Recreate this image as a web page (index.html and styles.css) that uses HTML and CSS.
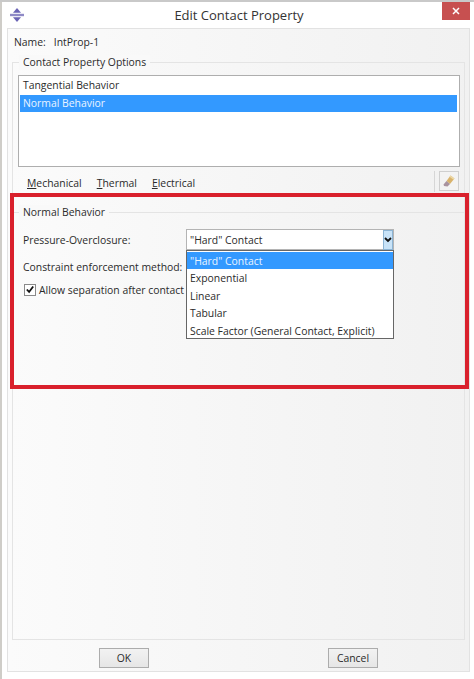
FILE: index.html
```html
<!DOCTYPE html>
<html lang="en">
<head>
<meta charset="utf-8">
<title>Edit Contact Property</title>
<link rel="stylesheet" href="styles.css">
</head>
<body>
<div class="window">
  <header class="titlebar">
    <svg class="app-icon" viewBox="0 0 14 14" width="14" height="14" aria-hidden="true">
      <path d="M7 0 L11 4.8 L3 4.8 Z" fill="#6a63b5"/>
      <path d="M7 14 L11 9.2 L3 9.2 Z" fill="#6a63b5"/>
      <path d="M0 5.8 H14 V8.2 H0 Z" fill="#8f8ac6"/>
    </svg>
    <h1 class="title">Edit Contact Property</h1>
    <button class="close" aria-label="Close">
      <svg viewBox="0 0 8 8" width="8" height="8"><path d="M1 1 L7 7 M7 1 L1 7" stroke="#fff" stroke-width="1.5"/></svg>
    </button>
  </header>

  <main class="panel">
    <div class="name-row"><span>Name:</span><span>IntProp-1</span></div>

    <section class="group options">
      <h2 class="legend">Contact Property Options</h2>
      <ul class="listbox">
        <li>Tangential Behavior</li>
        <li class="selected">Normal Behavior</li>
      </ul>
      <div class="menu-row">
        <nav class="menus">
          <span><u>M</u>echanical</span>
          <span><u>T</u>hermal</span>
          <span><u>E</u>lectrical</span>
        </nav>
        <div class="tool-sep"></div>
        <button class="tool" aria-label="Clear">
          <svg viewBox="0 0 16 16" width="16" height="16">
            <path d="M9.5 2.5 L13.5 5.5 L9 11 L5.5 8 Z" fill="#d9b36c"/>
            <path d="M5.5 8 L9 11 L6.5 13.5 L3 13 L2.5 11.5 Z" fill="#a9939f"/>
            <path d="M9.5 2.5 L13.5 5.5 L12.5 6.8 L8.5 3.8 Z" fill="#ecd8a6"/>
          </svg>
        </button>
      </div>
    </section>

    <section class="group behavior">
      <h2 class="legend">Normal Behavior</h2>
      <div class="form">
        <div class="form-row pressure">
          <label>Pressure-Overclosure:</label>
          <div class="combo">
            <span>"Hard" Contact</span>
            <span class="combo-btn">
              <svg viewBox="0 0 8 6" width="8" height="6"><path d="M1 1 L4 4 L7 1" fill="none" stroke="#111" stroke-width="1.8"/></svg>
            </span>
            <ul class="dropdown">
              <li class="selected">"Hard" Contact</li>
              <li>Exponential</li>
              <li>Linear</li>
              <li>Tabular</li>
              <li>Scale Factor (General Contact, Explicit)</li>
            </ul>
          </div>
        </div>
        <div class="form-row constraint"><label>Constraint enforcement method:</label></div>
        <div class="form-row separation">
          <span class="checkbox">
            <svg viewBox="0 0 11 11" width="11" height="11"><path d="M2 5.5 L4.5 8.2 L9 2.2" fill="none" stroke="#111" stroke-width="2"/></svg>
          </span>
          <label>Allow separation after contact</label>
        </div>
      </div>
    </section>

    <footer class="actions">
      <button class="btn ok">OK</button>
      <button class="btn cancel">Cancel</button>
    </footer>
  </main>

  <div class="annotation"></div>
</div>
</body>
</html>
```

FILE: styles.css
```css
* { box-sizing: border-box; }
html, body { margin: 0; padding: 0; }
body {
  width: 474px;
  height: 679px;
  overflow: hidden;
  background: #fff;
  font-family: "Open Sans", "Noto Sans", sans-serif;
  font-size: 10.4px;
  color: #2b2b2b;
}
.window {
  position: relative;
  width: 474px;
  height: 679px;
  padding: 2px 4px 7px 2px;
  background: linear-gradient(#c9c9c9, #c9c9c9) top / 100% 2px no-repeat,
              linear-gradient(#cfcdc8, #cfcdc8) left / 2px 100% no-repeat,
              #fff;
  display: flex;
  flex-direction: column;
}
.titlebar {
  height: 26px;
  flex: none;
  position: relative;
  padding-left: 6px;
  display: flex;
  align-items: center;
  justify-content: center;
}
.app-icon { position: absolute; left: 8px; top: 6px; }
.title {
  margin: 0;
  font-size: 13px;
  font-weight: 400;
  color: #333;
}
.close {
  position: absolute;
  right: 0;
  top: 0;
  width: 28px;
  height: 18px;
  border: 0;
  padding: 0;
  background: #c75050;
  display: flex;
  align-items: center;
  justify-content: center;
}
.panel {
  flex: 1;
  margin-left: 5px;
  border: 1px solid #e2e2e2;
  background: linear-gradient(90deg, #fbfbfb, #f1f1f1);
  padding: 0 4px 0 4px;
  display: flex;
  flex-direction: column;
}
.name-row {
  height: 33px;
  padding: 6px 0 0 2px;
  display: flex;
  gap: 8px;
  line-height: 15px;
}
.group {
  border: 1px solid #e4e4e4;
  position: relative;
}
.legend {
  position: absolute;
  left: 6px;
  top: -8px;
  margin: 0;
  padding: 0 4px;
  font-size: 10.4px;
  font-weight: 400;
  line-height: 15px;
  background: #f9f9f9;
}
.options {
  height: 150px;
  border-bottom: 0;
  padding: 12px 4px 0 5px;
}
.listbox {
  list-style: none;
  margin: 0;
  height: 92px;
  padding: 1px;
  border: 1px solid #aeaeae;
  background: #fff;
}
.listbox li {
  height: 17.5px;
  line-height: 17.5px;
  padding-left: 3px;
  margin-right: 1px;
}
.selected { background: #3399ff; color: #eaf4ff; }
.menu-row {
  height: 26px;
  margin-top: 1px;
  display: flex;
  align-items: center;
}
.menus {
  flex: 1;
  display: flex;
  gap: 15px;
  padding-left: 9px;
  position: relative;
  top: 2px;
}
.tool-sep { width: 1px; height: 21px; background: #d6d6d6; margin-right: 4px; }
.tool {
  width: 20px;
  height: 20px;
  margin-right: 1px;
  border: 1px solid #cfcfcf;
  background: #f3f3f3;
  padding: 1px;
  display: flex;
  align-items: center;
  justify-content: center;
}
.behavior {
  height: 428px;
  flex: none;
}
.form { padding: 16px 0 0 10px; }
.form-row { display: flex; align-items: center; }
.pressure { height: 21px; }
.constraint { height: 15px; margin-top: 9px; }
.separation { height: 15px; margin-top: 8px; gap: 3px; padding-left: 1px; }
.pressure label { width: 163px; }
.combo {
  position: relative;
  width: 208px;
  height: 21.5px;
  border: 1px solid #b4b4b4;
  background: #fff;
  padding-left: 3px;
  display: flex;
  align-items: center;
}
.combo-btn {
  position: absolute;
  right: 0;
  top: 0;
  width: 10px;
  height: 20px;
  background: #c8e3f8;
  border: 1px solid #8cb4d4;
  display: flex;
  align-items: center;
  justify-content: center;
}
.dropdown {
  position: absolute;
  left: -1px;
  top: 20px;
  width: 208px;
  height: 89px;
  margin: 0;
  padding: 1px 0 0;
  list-style: none;
  border: 1px solid #666;
  background: #fff;
  z-index: 2;
}
.dropdown li {
  height: 17.5px;
  line-height: 19px;
  padding-left: 3px;
}
.checkbox {
  width: 12px;
  height: 12px;
  border: 1px solid #8a8a8a;
  background: #fff;
  display: flex;
  align-items: center;
  justify-content: center;
}
.actions { position: relative; flex: 1; }
.btn {
  position: absolute;
  top: 8px;
  height: 19.5px;
  width: 50px;
  border: 1px solid #acacac;
  background: linear-gradient(#f2f2f2, #e6e6e6);
  font: inherit;
  color: #2b2b2b;
  padding: 0;
}
.ok { left: 87px; }
.cancel { left: 316px; }
.annotation {
  position: absolute;
  left: 10px;
  top: 193px;
  width: 459px;
  height: 196px;
  border: 4px solid #d9202c;
  pointer-events: none;
  z-index: 3;
}
```
